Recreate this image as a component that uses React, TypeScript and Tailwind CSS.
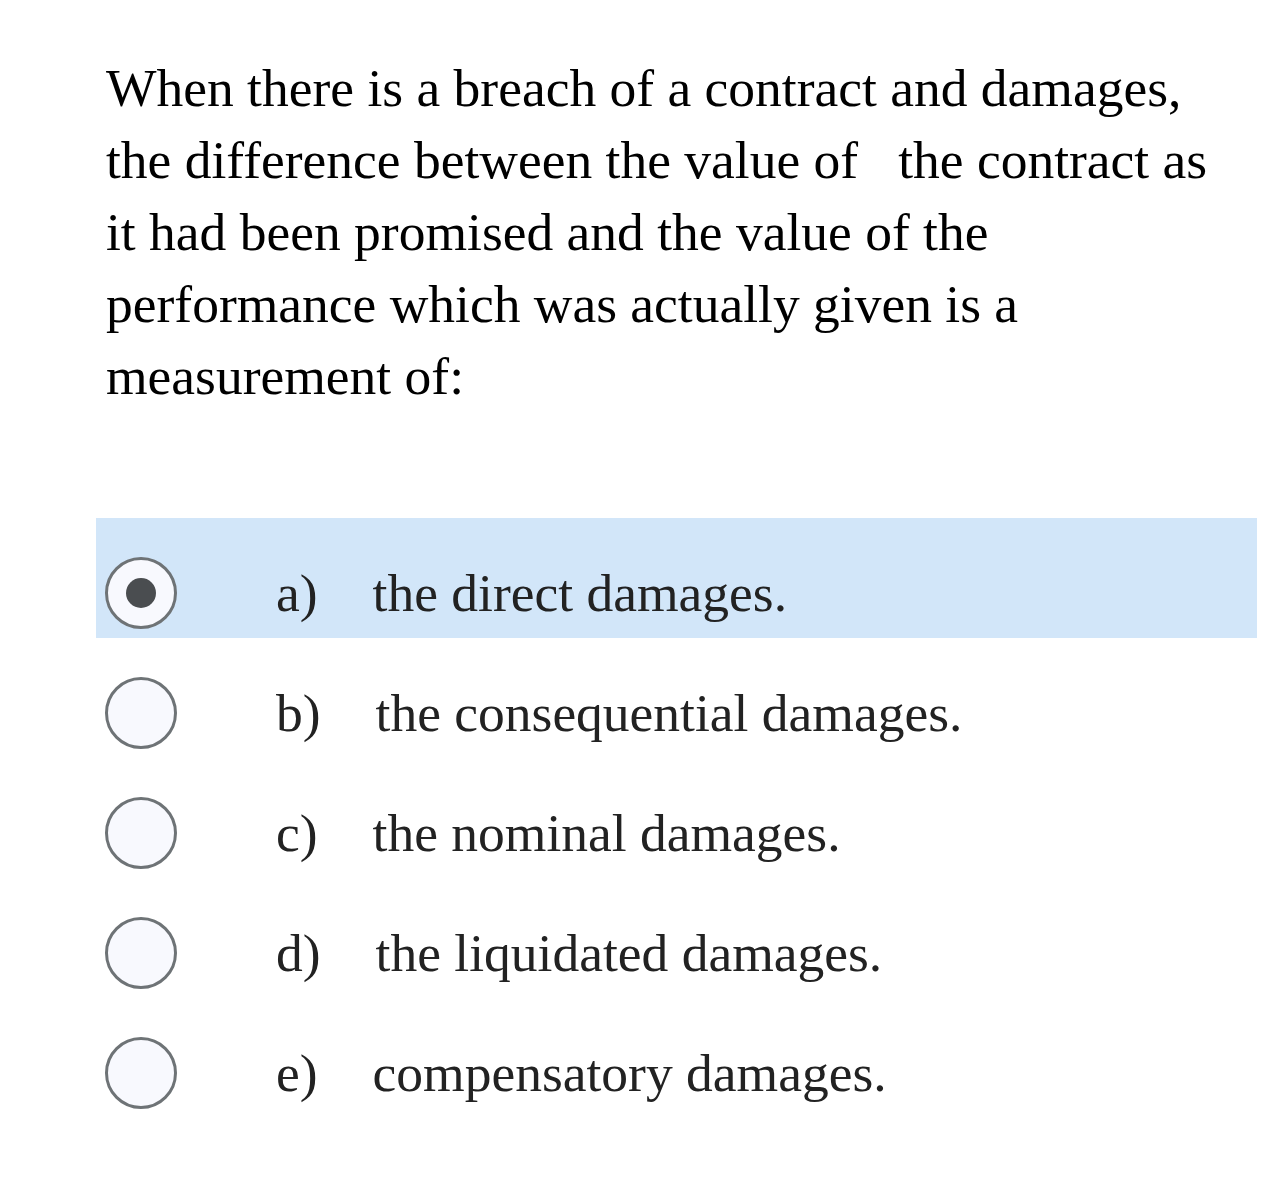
const LINES = [
  "When there is a breach of a contract and damages,",
  "the difference between the value of   the contract as",
  "it had been promised and the value of the",
  "performance which was actually given is a",
  "measurement of:",
];

const OPTIONS = [
  { key: "a)", label: "the direct damages." },
  { key: "b)", label: "the consequential damages." },
  { key: "c)", label: "the nominal damages." },
  { key: "d)", label: "the liquidated damages." },
  { key: "e)", label: "compensatory damages." },
];

const Radio = ({ checked }: { checked: boolean }) => (
  <div className="w-[72px] h-[72px] rounded-full border-[3px] border-[#6e7376] bg-[#f8f9fe] flex items-center justify-center shrink-0">
    {checked && <div className="w-[30px] h-[30px] rounded-full bg-[#4a4d50]" />}
  </div>
);

export default function App() {
  const selected = 0;

  return (
    <div
      className="w-[1284px] h-[1183px] bg-white pt-[52px]"
      style={{ fontFamily: '"Liberation Serif", "Times New Roman", serif' }}
    >
      {/* Question */}
      <div className="pl-[106px] text-[53.5px] leading-[72px] text-black whitespace-pre">
        {LINES.map((line) => (
          <div key={line}>{line}</div>
        ))}
      </div>

      {/* Answers */}
      <div className="mt-[106px] ml-[96px] w-[1161px]">
        {OPTIONS.map((opt, i) => (
          <div
            key={opt.key}
            className={`h-[120px] pt-[39px] ${i === selected ? "bg-[#d2e6f9]" : ""}`}
          >
            <div className="flex items-center h-[72px] pl-[9px]">
              <Radio checked={i === selected} />
              <div className="ml-[99px] flex items-center gap-[55px] text-[53.5px] leading-[60px] text-[#222222]">
                <span>{opt.key}</span>
                <span>{opt.label}</span>
              </div>
            </div>
          </div>
        ))}
      </div>
    </div>
  );
}
